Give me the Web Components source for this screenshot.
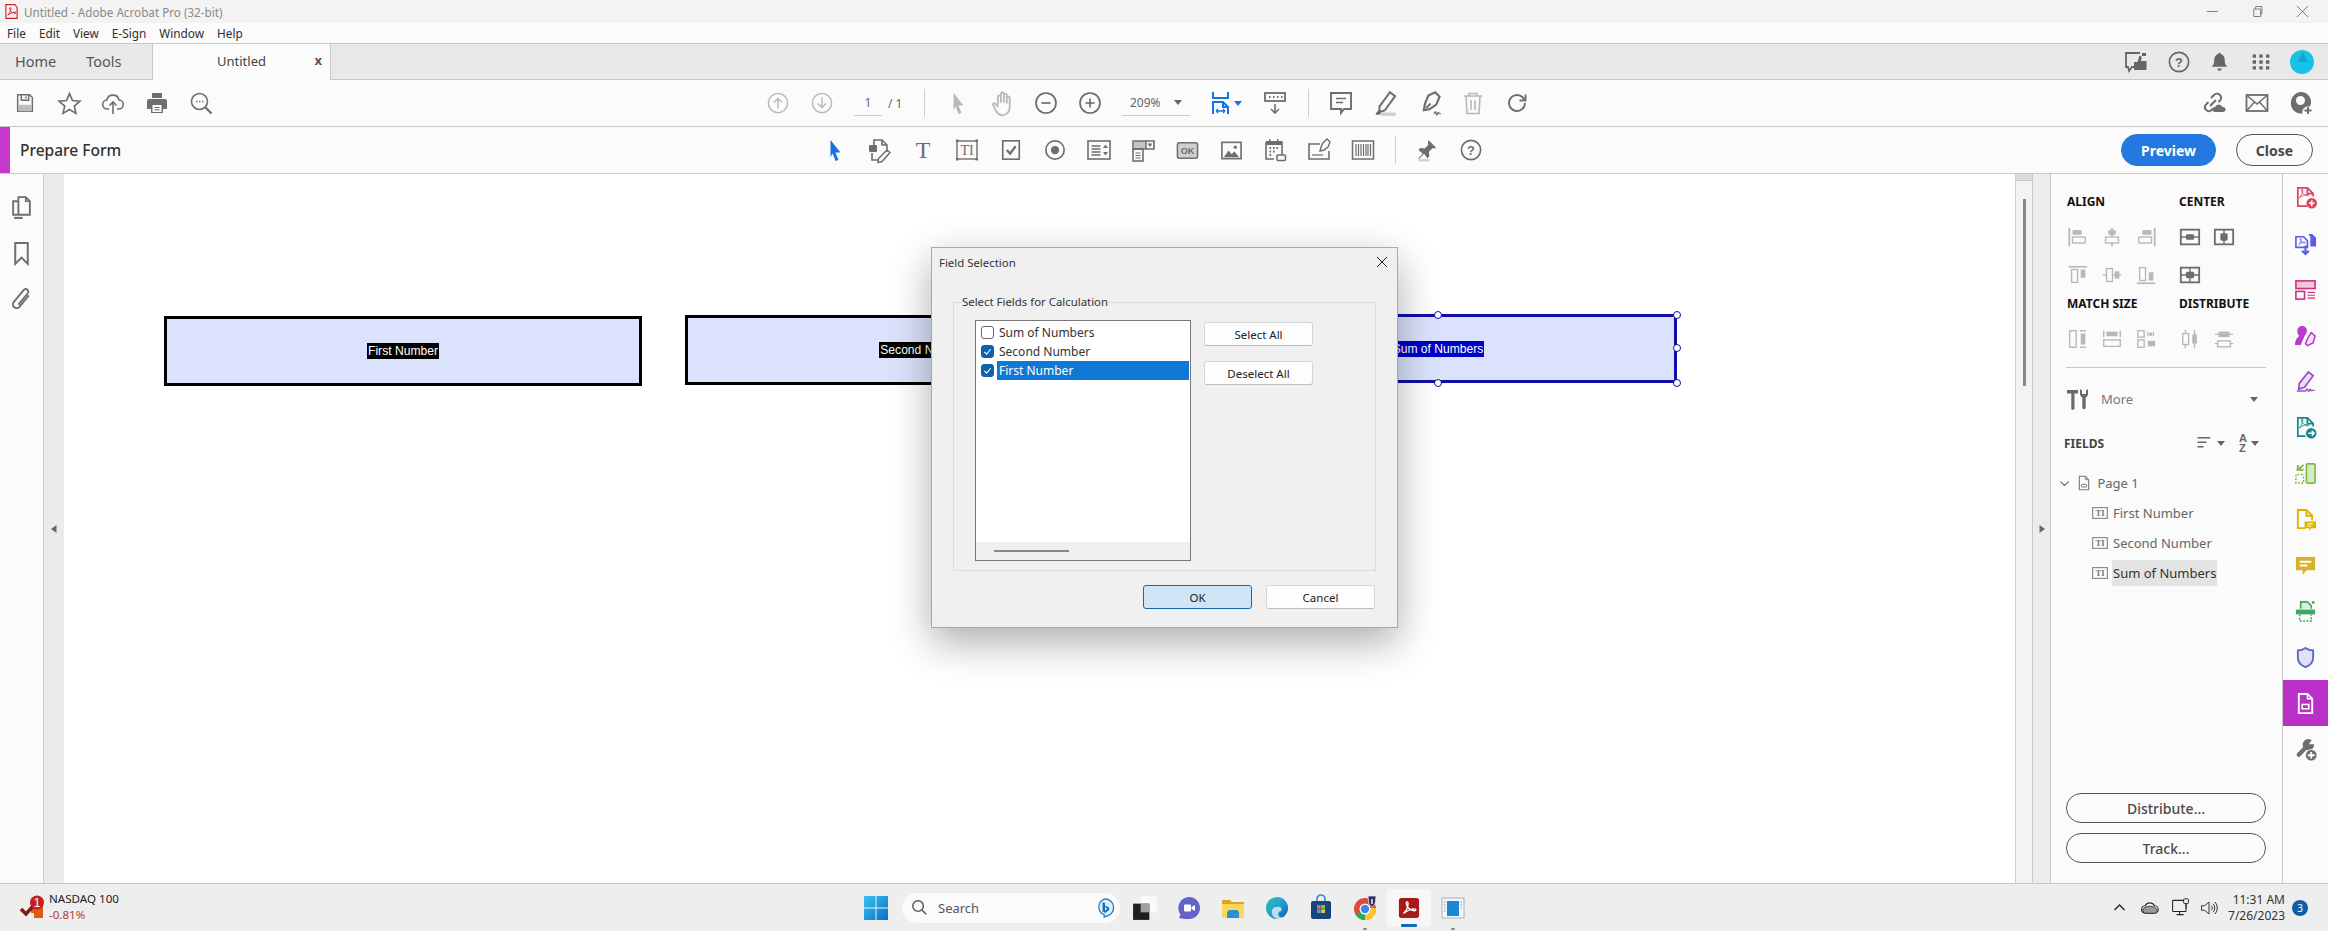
<!DOCTYPE html>
<html lang="en">
<head>
<meta charset="utf-8">
<title>Untitled - Adobe Acrobat Pro (32-bit)</title>
<style>
  html, body { margin: 0; padding: 0; background: #fff; }
  body { width: 2328px; height: 931px; overflow: hidden; font-family: "Noto Sans", "Open Sans", sans-serif; }
</style>
</head>
<body>
<acro-app></acro-app>
<script>
const F = 'fill="currentColor" stroke="none"';
const SWIRL = 'M6 18c3-3 5-8 5-11 0-2-2-2-2 0 0 4 5 8 9 8 2 0 2-2 0-2-4 0-8 2-12 5z';
const ICONS = {
  save: `<path d="M4 3h13l3 3v15H4z"/><path d="M8 3v6h8V3M13 5v2"/><rect x="5" y="14" width="14" height="7" fill="#bdbdbd" stroke="none"/>`,
  star: `<path d="M12 2.5l2.9 6.6 7.1.7-5.4 4.7 1.6 7-6.2-3.7-6.2 3.7 1.6-7L2 9.8l7.1-.7z"/>`,
  upload: `<path d="M8 18H6.5a4.5 4.5 0 0 1-.6-9A6.2 6.2 0 0 1 18 9a4.5 4.5 0 0 1-.5 9H16"/><path d="M12 23V11M8.5 14.5L12 11l3.5 3.5"/>`,
  print: `<path ${F} d="M7 2h10v5H7zM4 8h16a2 2 0 0 1 2 2v8h-4v4H6v-4H2v-8a2 2 0 0 1 2-2z"/><rect x="7.5" y="14" width="9" height="7" fill="#fbfbfb" stroke="none"/><path d="M9.5 16.5h5M9.5 18.8h5" stroke-width="1"/>`,
  find: `<circle cx="10.5" cy="10.5" r="8"/><path d="M16.5 16.5l6 6" stroke-width="2.2"/><path d="M7 10.5h1.4M10 10.5h1.4M13 10.5h1.4" stroke-width="1.6"/>`,
  up: `<circle cx="12" cy="12" r="10.5"/><path d="M12 18V7M7.5 11.5L12 7l4.5 4.5"/>`,
  down: `<circle cx="12" cy="12" r="10.5"/><path d="M12 6v11M7.5 12.5L12 17l4.5-4.5"/>`,
  arrow: `<path ${F} d="M7.5 2l10 12.5h-5l3 7.5-3 1-2.8-7.5L7.5 19z"/>`,
  hand: `<path d="M8 13V6a1.3 1.3 0 0 1 2.6 0v5V3.5a1.3 1.3 0 0 1 2.6 0V11V4.5a1.3 1.3 0 0 1 2.6 0V12V7a1.3 1.3 0 0 1 2.6 0v8c0 4-2.5 7.5-6.3 7.5-3 0-4.5-1.5-6-4l-2.4-5c-.7-1.3 1-2.4 2-1.2L8 15"/>`,
  minus: `<circle cx="12" cy="12" r="10"/><path d="M7.5 12h9"/>`,
  plus: `<circle cx="12" cy="12" r="10"/><path d="M7.5 12h9M12 7.5v9"/>`,
  fit: `<path d="M4 1v6h15V1M4 23V11h10l5 5v7M14 11v5h5" stroke-width="2"/><path d="M7 20h9M7 20l2-2M7 20l2 2M16 20l-2-2M16 20l-2 2" stroke-width="1.3"/>`,
  select: `<rect x="2" y="2" width="20" height="8" stroke-width="1.8"/><path d="M6 6h1.5M10 6h1.5M14 6h1.5M18 6h1.5" stroke-width="2"/><path d="M12 13v9M8 18l4 4 4-4"/>`,
  comment: `<path d="M2 2h20v16h-7l-3 4v-4H2z" stroke-width="1.9"/><path d="M7 7.5h10M7 11.5h7"/>`,
  highlight: `<path d="M16 2l4.5 3.5-9 12.5-5 2 .2-5.5z" stroke-width="1.8"/><rect x="8" y="20" width="13" height="3" fill="#cfcfcf" stroke="none"/><path ${F} d="M4 20l2.5-3 2 1.5L7 22H3z"/>`,
  sign: `<path d="M17 2l4 4-3 7-6 4-5 1 1-6 3-7z" stroke-width="1.9"/><path d="M9 16l4-4"/><path d="M16 21c1-2 2-2 2 0s1 1 1.5-.5.7 1 2.5.5" stroke-width="1.2"/>`,
  trash: `<path d="M8 5V2.5h8V5M3 5h18M5 5l1 17.5h12L19 5M10 9v10M14 9v10"/>`,
  redo: `<path d="M20 12a8 8 0 1 1-2.4-5.7L20 9" stroke-width="1.9"/><path d="M20.5 3.5V9.5h-6" stroke-width="1.9"/>`,
  prep: `<path d="M7 8V2h8l5 5v7M15 2v5h5" stroke-width="1.6"/><rect x="2" y="7" width="8" height="7" rx="1" fill="currentColor" stroke="none"/><path d="M5 15v7h6"/><path d="M20 12l3 2.5-8 9-4 1 .5-4z" stroke-width="1.5"/>`,
  tfield: `<text x="12" y="20" text-anchor="middle" font-family="Liberation Serif" font-size="24" ${F}>T</text>`,
  tifield: `<rect x="2" y="3" width="20" height="18" stroke-width="1.4"/><path d="M1 1.5h2.5v2.5H1zM20.5 1.5H23v2.5h-2.5zM1 20h2.5v2.5H1zM20.5 20H23v2.5h-2.5z" ${F}/><text x="12" y="17" text-anchor="middle" font-family="Liberation Serif" font-size="14" ${F}>TI</text>`,
  check: `<rect x="3" y="2" width="18" height="20" stroke-width="1.8"/><path d="M7.5 12l3.5 4 6-8" stroke-width="2.6"/>`,
  radio: `<circle cx="12" cy="12" r="10" stroke-width="1.8"/><circle cx="12" cy="12" r="4.5" ${F}/>`,
  list: `<rect x="1" y="3" width="22" height="18" stroke-width="1.6"/><path d="M4.5 8h9M4.5 11h9M4.5 14h9M4.5 17h9" stroke-width="1.3"/><path ${F} d="M16 10l2.5-3.5L21 10zM16 14l2.5 3.5L21 14z"/>`,
  combo: `<rect x="2" y="3" width="13" height="8" fill="#c4c4c4" stroke="#777"/><path ${F} d="M16.5 5.5h5L19 9z"/><rect x="2" y="11" width="10" height="12"/><path d="M4.5 15h5M4.5 17.5h5M4.5 20h5" stroke-width="1.2"/><path d="M15 3h8v8h-8"/>`,
  okbtn: `<rect x="1.5" y="4" width="21" height="16" rx="2" fill="#cfcfcf" stroke-width="1.6"/><text x="12" y="16" text-anchor="middle" font-family="Liberation Sans" font-weight="700" font-size="9.5" ${F}>OK</text>`,
  image: `<rect x="2" y="3.5" width="20" height="17" stroke-width="1.7"/><path ${F} d="M4 19l5-7 3 4 3-3 5 6z"/><circle cx="16" cy="8.5" r="1.7" ${F}/>`,
  date: `<path d="M3 4h16v14H13M3 4v17h8" stroke-width="1.6"/><path ${F} d="M3 3h16v4H3zM6 1h1.5v3H6zM14 1h1.5v3H14z"/><path d="M6.5 10h1.6M10 10h1.6M13.5 10h1.6M6.5 13.5h1.6M10 13.5h1.6M6.5 17h1.6" stroke-width="2"/><rect x="14" y="17" width="8.5" height="5.5" rx="1" stroke-width="1.5" fill="#fbfbfb"/>`,
  signbox: `<path d="M13 6H2v15h20v-8" stroke-width="1.6"/><path d="M5 17h11" stroke-width="1.2"/><path d="M20 1l3 3-2 5-4 3-4 1 1-4 2-4z" stroke-width="1.4"/>`,
  barcode: `<rect x="1.5" y="3" width="21" height="18" stroke-width="1.5"/><path d="M5 6v12M7.5 6v12M10 6v12M12.5 6v12M15 6v12M17 6v12M19.5 6v12" stroke-width="1.2"/>`,
  pin: `<path ${F} d="M14 1l8 8-2.5 1-1-.5-4 4 .5 4.5-2 2-3.5-4.5L4 21l-.5-.5L8 15l-4.5-3.5 2-2 4.5.5 4-4-.5-1z"/><rect x="4" y="21" width="11" height="2.5" fill="#d0d0d0" stroke="none"/>`,
  help: `<circle cx="12" cy="12" r="10.5" stroke-width="1.8"/><text x="12" y="17" text-anchor="middle" font-family="Liberation Sans" font-weight="700" font-size="14" ${F}>?</text>`,
  feedback: `<path d="M16 3H2v14h2l1 4 3-4h2" stroke-width="1.8"/><path ${F} d="M10 12h3.5l1.5-5c.5-2 3-1.5 2.5 1L17 11h5.5v9H10z"/><path ${F} d="M18 3h4v3h-4z"/>`,
  bell: `<path ${F} d="M12 2c1 0 1.5.7 1.5 1.5C17 4.5 18 8 18 11c0 3 1 5 3 7H3c2-2 3-4 3-7 0-3 1-6.5 4.5-7.5C10.5 2.7 11 2 12 2zM9.5 20h5a2.5 2.5 0 0 1-5 0z"/>`,
  grid: `<path ${F} d="M2 3h4v4H2zM10 3h4v4h-4zM18 3h4v4h-4zM2 10h4v4H2zM10 10h4v4h-4zM18 10h4v4h-4zM2 17h4v4H2zM10 17h4v4h-4zM18 17h4v4h-4z"/>`,
  avatar: `<circle cx="12" cy="12" r="12" fill="#17c4e6" stroke="none"/><path d="M7 12l6-10 5 10z" fill="#1aa4c6" stroke="none"/>`,
  link: `<path d="M9 15l6-6M7.5 11L4.5 14a4 4 0 0 0 5.5 5.5l2-2M10 7l3-3a4 4 0 0 1 6 5.5l-1.5 1.5" stroke-width="2"/><path ${F} d="M14 21a2.5 2.5 0 0 1 0-5 4 4 0 0 1 7.5 0 2.5 2.5 0 0 1 1 5z"/>`,
  mail: `<rect x="1.5" y="4" width="21" height="16" stroke-width="1.8"/><path d="M1.5 4L12 13 22.5 4M1.5 20l8-9M22.5 20l-8-9" stroke-width="1.5"/>`,
  user: `<path ${F} d="M12 1a10 10 0 0 1 9 14.5 6 6 0 0 0-7.5 7.3A10 10 0 1 1 12 1z"/><circle cx="11.5" cy="9.5" r="4.5" fill="#fbfbfb" stroke="none"/><path d="M19 16v7M15.5 19.5h7" stroke-width="2"/>`,
  pages: `<path d="M8 19H4V6h4M9 2h7l4 4v13H9z" stroke-width="1.8"/><path d="M16 2v4h4" stroke-width="1.5"/><path ${F} d="M5 21h8v2H5z"/>`,
  bookmark: `<path d="M6 2h12v20l-6-6-6 6z" stroke-width="1.9"/>`,
  clip: `<path d="M19 8l-9 11a3.5 3.5 0 0 1-5.5-4.5L14 3a2.5 2.5 0 0 1 4 3L9 17" stroke-width="1.8"/>`,
  al1: `<path d="M2.5 2v20" stroke-width="2"/><rect x="6" y="4.5" width="10" height="5" ${F}/><rect x="6" y="12" width="14" height="6.5"/>`,
  al2: `<path d="M12 2v20" stroke-width="1.8"/><rect x="8" y="4.5" width="8" height="5" ${F}/><rect x="5" y="12" width="14" height="6.5" fill="#fbfbfb"/>`,
  al3: `<path d="M21.5 2v20" stroke-width="2"/><rect x="8" y="4.5" width="10" height="5" ${F}/><rect x="4" y="12" width="14" height="6.5"/>`,
  al4: `<path d="M2 3h20" stroke-width="1.8"/><rect x="5" y="6" width="6.5" height="14"/><rect x="15" y="6" width="5" height="9" ${F}/>`,
  al5: `<path d="M2 12h20" stroke-width="1.5"/><rect x="6" y="5" width="6.5" height="14" fill="#fbfbfb"/><rect x="15" y="8" width="5" height="8" ${F}/>`,
  al6: `<path d="M2 21h20" stroke-width="1.8"/><rect x="5" y="4" width="6.5" height="14"/><rect x="15" y="9" width="5" height="9" ${F}/>`,
  c1: `<rect x="2" y="4" width="20" height="16" stroke-width="2"/><path d="M2 12h20" stroke-width="1.5"/><rect x="7.5" y="9" width="9" height="6" rx="1.5" ${F}/>`,
  c2: `<rect x="2" y="4" width="20" height="16" stroke-width="2"/><path d="M12 4v16" stroke-width="1.5"/><rect x="8" y="8" width="8" height="8" rx="1.5" ${F}/>`,
  c3: `<rect x="2" y="4" width="20" height="16" stroke-width="2"/><path d="M2 12h20M12 4v16" stroke-width="1.5"/><rect x="7.5" y="8.5" width="9" height="7" rx="1.5" ${F}/>`,
  ms1: `<rect x="3" y="3" width="7" height="18"/><path d="M14 3h7M14 21h7" stroke-width="1.6"/><rect x="15" y="6" width="5" height="12" ${F}/>`,
  ms2: `<rect x="3" y="13" width="18" height="7"/><path d="M3 3v7M21 3v7" stroke-width="1.6"/><rect x="6" y="4" width="12" height="5" ${F}/>`,
  ms3: `<rect x="3" y="3" width="7" height="7"/><rect x="3" y="13" width="7" height="8"/><rect x="14" y="14" width="8" height="6" ${F}/><path d="M14 4v5M20 4v5" stroke-width="1.4"/><rect x="15.5" y="5" width="3" height="3.5" ${F}/>`,
  d1: `<path d="M7 2v20M17 2v20" stroke-width="1.5"/><rect x="4" y="6" width="6.5" height="12" fill="#fbfbfb"/><rect x="14.5" y="7" width="5" height="10" ${F}/>`,
  d2: `<path d="M2 7h20M2 17h20" stroke-width="1.5"/><rect x="6" y="4" width="12" height="6" ${F}/><rect x="5" y="14" width="14" height="6.5" fill="#fbfbfb"/>`,
  tools: `<path ${F} d="M1 3h11v3.5H8.5V22c0 1-3.2 1-3.2 0V6.5H1zM14 2v5c0 2 1.3 3 2.3 3.5V21c0 1.5 3.4 1.5 3.4 0V10.5C20.7 10 22 9 22 7V2l-2 1.5V7h-4V3.5z"/>`,
  sortlines: `<path d="M2 5h17M2 11h12M2 17h8" stroke-width="2"/>`,
  pagefield: `<path d="M5 2h9l5 5v15H5z" stroke-width="1.6"/><path d="M14 2v5h5" stroke-width="1.3"/><rect x="8" y="14" width="8" height="4" rx="1" stroke-width="1.4"/>`,
  treefield: `<rect x="1" y="4" width="22" height="16" stroke-width="1.5"/><text x="12" y="17" text-anchor="middle" font-family="Liberation Serif" font-weight="700" font-size="13" ${F}>TI</text>`,
  tri: `<path ${F} d="M7 4l11 8-11 8z"/>`,
  trileft: `<path ${F} d="M17 4L6 12l11 8z"/>`,
  t_create: `<path d="M14 21H4V2h10l6 6v3M14 2v6h6" stroke="#d8465b" stroke-width="1.8"/><path d="${SWIRL}" transform="translate(1 -1) scale(.75)" stroke="#d8465b" stroke-width="1.2"/><circle cx="18.5" cy="18" r="5.5" fill="#d8465b" stroke="none"/><path d="M18.5 15v6M15.5 18h6" stroke="#fff" stroke-width="1.8"/>`,
  t_combine: `<path d="M15 2h4l4 4v9h-6V5z" fill="#5c5ce0" stroke="none"/><path d="M2 5h8l4 4v7H2z" stroke="#5c5ce0" stroke-width="1.7"/><path d="${SWIRL}" transform="translate(2 4) scale(.5)" stroke="#5c5ce0"/><path d="M12 14v9M8.5 19.5L12 23l3.5-3.5" stroke="#5c5ce0" stroke-width="2.2"/>`,
  t_layout: `<rect x="2" y="3" width="20" height="8" fill="#f3c6dc" stroke="#c6387e" stroke-width="1.7"/><rect x="2" y="14" width="9" height="8" stroke="#c6387e" stroke-width="1.7"/><path d="M14 15h8M14 18h8M14 21h8" stroke="#c6387e" stroke-width="1.2"/>`,
  t_reqsign: `<path d="M8.5 2a5 5 0 0 1 5 5c0 2-1 3.5-2 4.5L7 22H1c0-4.500 1.500-7.500 4.500-9.500C4 11.500 3.500 9 3.500 7a5 5 0 0 1 5-5z" fill="#b93bc9" stroke="none"/><path d="M18 9l4 3.500-2 7-6 3-2-2 2.500-6z" fill="#f6e6f9" stroke="#b93bc9" stroke-width="1.6"/>`,
  t_fill: `<path d="M15 2l5 4-9 12-6 2 .5-6z" fill="#ebdcf7" stroke="#9a4fc9" stroke-width="1.8"/><path d="M3 22h9c1-2 2-3 2.5-1s1.5 1 2-.5 1 1.5 2 1 1-.5 3-.5" stroke="#9a4fc9" stroke-width="1.5"/>`,
  t_export: `<path d="M12 21H4V2h10l6 6v3M14 2v6h6" stroke="#14888c" stroke-width="1.8"/><path d="${SWIRL}" transform="translate(1 -1) scale(.75)" stroke="#14888c" stroke-width="1.2"/><circle cx="18" cy="18" r="5.5" fill="#14888c" stroke="none"/><path d="M15 18h6M18.5 15.5L21 18l-2.5 2.5" stroke="#fff" stroke-width="1.6"/>`,
  t_organize: `<rect x="13" y="2" width="9" height="20" rx="1" fill="#d8eac4" stroke="#7fb84b" stroke-width="1.7"/><path d="M9 13H2v9h8v-9" stroke="#7fb84b" stroke-width="1.6" stroke-dasharray="2 1.6"/><path d="M10 3L4 8h6M4 8V3" stroke="#7fb84b" stroke-width="2"/>`,
  t_note: `<path d="M12 21H4V2h9l6 6v5M13 2v6h6" stroke="#d7b700" stroke-width="2"/><path d="M11 14h12v7h-5l-2 3v-3h-5z" fill="#d7b700" stroke="none"/><path d="M14 16.5h6M14 18.8h4" stroke="#fff" stroke-width="1"/>`,
  t_comment: `<path d="M2 3h20v14h-9l-4 5v-5H2z" fill="#d9b02a" stroke="none"/><path d="M6 8h12M6 12h8" stroke="#fff" stroke-width="2"/>`,
  t_scan: `<path d="M7 9V2h7l4 4v3" fill="#d7f0de" stroke="#3ea860" stroke-width="1.7"/><path d="M2 10h20v5H2z" fill="#3ea860" stroke="none"/><path d="M6 15v7h12v-7" stroke="#3ea860" stroke-width="1.6" stroke-dasharray="2 1.5"/><path d="M20 1v3M18.5 2.5h3" stroke="#3ea860"/>`,
  t_shield: `<path d="M12 2c3 2 5.5 2.5 8 2.5V12c0 5-4 8.5-8 10-4-1.5-8-5-8-10V4.5C6.5 4.5 9 4 12 2z" fill="#dfe2f7" stroke="#5f62c4" stroke-width="1.9"/>`,
  t_form: `<path d="M5 2h9l5 5v15H5z" fill="none" stroke="#fff" stroke-width="2"/><path d="M14 2v5h5" stroke="#fff" stroke-width="1.5"/><rect x="8.5" y="13" width="7" height="4.5" stroke="#fff" stroke-width="1.6"/>`,
  t_wrench: `<path d="M13 9L5 17.5" stroke="#6e6e6e" stroke-width="4.5" stroke-linecap="round"/><circle cx="15" cy="7" r="6" fill="#6e6e6e" stroke="none"/><path d="M15.5 6.5L20 0h5v6.5z" fill="#fbfbfb" stroke="none"/><circle cx="18" cy="18" r="6" fill="#6e6e6e" stroke="#fbfbfb" stroke-width=".8"/><path d="M18 14.5v7M14.5 18h7" stroke="#fff" stroke-width="1.9"/>`,
  chev: `<path d="M3 8l9 8 9-8" stroke-width="2.6"/>`,
  acro: `<path d="M3 1h14l4 4v18H3z" fill="#fdf1f1" stroke="#c9252c" stroke-width="1.8"/><path d="${SWIRL}" stroke="#c9252c" stroke-width="1.5"/>`,
  winmin: `<path d="M3 12h18" stroke-width="1.5"/>`,
  winres: `<path d="M6 8h11v12H6zM9 8V4h10v12h-2" stroke-width="1.5"/>`,
  winclose: `<path d="M3 3l18 18M21 3L3 21" stroke-width="1.5"/>`,
  dlgclose: `<path d="M2 2l20 20M22 2L2 22" stroke-width="2"/>`,
  winlogo: `<defs><linearGradient id="w" x1="0" y1="0" x2="1" y2="1"><stop offset="0" stop-color="#36c4f4"/><stop offset="1" stop-color="#0a6fc4"/></linearGradient></defs><path fill="url(#w)" stroke="none" d="M0 0h11.5v11.5H0zM12.5 0H24v11.5H12.5zM0 12.5h11.5V24H0zM12.5 12.5H24V24H12.5z"/>`,
  glass: `<circle cx="10" cy="10" r="7.5" stroke-width="2"/><path d="M15.5 15.5l6 6" stroke-width="2.2"/>`,
  bing: `<path d="M12 1a10.5 10.5 0 0 1 3 20.5L11 23v-3A10 10 0 0 1 12 1z" fill="#dff0fb" stroke="#1a7bc4" stroke-width="1.5"/><path d="M9 5l3 1v9l3-2-2-1-1-3 5 2.5v3L12 18l-3-2z" fill="#1a6fc0" stroke="none"/>`,
  task: `<rect x="8" y="1" width="15" height="15" fill="#fafafa" stroke="none"/><rect x="1" y="8" width="15" height="15" fill="#1f1f1f" stroke="none"/><rect x="8" y="8" width="8" height="8" fill="#a0a0a0" stroke="none"/>`,
  meet: `<path d="M12 1a11 11 0 0 1 0 22H7.5L2 22l1.5-3.5A11 11 0 0 1 12 1z" fill="#6264c8" stroke="none"/><rect x="7" y="8.5" width="7" height="7" rx="1" fill="#fff" stroke="none"/><path d="M14.5 11l3.5-2v6l-3.5-2z" fill="#fff" stroke="none"/>`,
  folder: `<path d="M1 4h8l2 2h12v3H1z" fill="#d9a425" stroke="none"/><path d="M1 8h22v14H1z" fill="#fbd75b" stroke="none"/><path d="M6 16h12v6H6zM6 16l2-2h8l2 2z" fill="#2b8fd8" stroke="none"/>`,
  edge: `<defs><linearGradient id="e" x1="0" y1="0" x2="1" y2="1"><stop offset="0" stop-color="#35c1a0"/><stop offset=".5" stop-color="#1f9fd8"/><stop offset="1" stop-color="#0d5da8"/></linearGradient></defs><circle cx="12" cy="12" r="11" fill="url(#e)" stroke="none"/><path d="M13 23c-5-1-7-5-6-9 1-3 5-4 8-3 2 1 2 3 1 4-3 1-4 4-1 6 2 1 5 0 7-2-2 3-5 5-9 4z" fill="#f2f6fa" opacity=".75" stroke="none"/>`,
  store: `<path d="M8 6V3a4 4 0 0 1 8 0v3" stroke="#2d8bc6" stroke-width="1.6"/><rect x="2" y="5" width="20" height="18" rx="2" fill="#17447c" stroke="none"/><rect x="8" y="9" width="3.7" height="3.7" fill="#ef6b3c" stroke="none"/><rect x="12.3" y="9" width="3.7" height="3.7" fill="#7fc34a" stroke="none"/><rect x="8" y="13.3" width="3.7" height="3.7" fill="#33a8e8" stroke="none"/><rect x="12.3" y="13.3" width="3.7" height="3.7" fill="#f6c02b" stroke="none"/>`,
  chrome: `<circle cx="12" cy="13" r="11" fill="#e2483d" stroke="none"/><path d="M12 13L2.5 18.5A11 11 0 0 0 12 24l5.5-9z" fill="#35a853" stroke="none"/><path d="M12 13l5-1h6a11 11 0 0 1-11 12z" fill="#fbc52f" stroke="none"/><circle cx="12" cy="13" r="5.5" fill="#fff" stroke="none"/><circle cx="12" cy="13" r="4.2" fill="#3e85f0" stroke="none"/><path d="M15 0h8l-.5 6c-.5 3-2.5 4.5-3.5 5-1-.5-3-2-3.5-5z" fill="#2b2f66" stroke="#dfe2f0" stroke-width=".8"/><path d="M19 3v5" stroke="#fff" stroke-width="1.4"/>`,
  acrobat: `<rect x="1" y="1" width="22" height="22" rx="3" fill="#a81a1a" stroke="none"/><path d="${SWIRL}" stroke="#fff" stroke-width="1.5"/>`,
  note: `<rect x="1" y="2" width="22" height="20" fill="#f5f8fb" stroke="#9fb0bf" stroke-width="1"/><rect x="6" y="5" width="12" height="15" fill="#1a86d8" stroke="none"/><path d="M3 6h1.5M3 9h1.5M3 12h1.5M3 15h1.5M19.5 6H21M19.5 9H21M19.5 12H21" stroke="#888" stroke-width="1"/>`,
  caretup: `<path d="M4 16l8-8 8 8" stroke-width="2.2"/>`,
  cloud: `<path d="M6 19a5 5 0 0 1-.5-10A7 7 0 0 1 18 9a5 5 0 0 1 0 10z" fill="#fff" stroke="#333" stroke-width="1.5"/><path d="M5.5 11c4-2 9-2 13 0l3 3a4 4 0 0 1-3.5 5H6a5 5 0 0 1-4-5z" fill="#9a9a9a" stroke="#333" stroke-width="1.2"/>`,
  net: `<rect x="2" y="3" width="17" height="14" rx="1" stroke-width="1.3"/><path d="M7 21h9M11 17v4" stroke-width="1.3"/><rect x="16" y="1" width="6" height="6" rx="1" fill="#eee" stroke-width="1.2"/><path d="M19 7v6" stroke-width="1.2"/>`,
  vol: `<path d="M2 9h4l6-5v16l-6-5H2z" stroke-width="1.2"/><path d="M15 9a4 4 0 0 1 0 6M17.5 6.5a8 8 0 0 1 0 11M20 4a12 12 0 0 1 0 16" stroke-width="1.2"/>`,
  stock: `<path d="M11 8h5v-2h7v16h-9v-5h-3z" fill="#dd5a14" stroke="none"/><path d="M1 13l5 5 8-9" stroke="#7a1d10" stroke-width="3.5"/><circle cx="17" cy="6.5" r="7" fill="#c21f1f" stroke="none"/><text x="17" y="11" text-anchor="middle" font-family="Liberation Sans" font-size="12" fill="#fff" stroke="none">1</text>`
};

class AcIcon extends HTMLElement {
  connectedCallback() {
    if (this.shadowRoot) return;
    this.attachShadow({ mode: 'open' });
    const size = this.getAttribute('size') || 24;
    const sw = this.getAttribute('stroke') || 1.6;
    this.shadowRoot.innerHTML = `
      <style>
        :host { display: inline-flex; align-items: center; justify-content: center; color: inherit; line-height: 0; flex: none; }
        svg { display: block; overflow: visible; }
      </style>
      <svg width="${size}" height="${size}" viewBox="0 0 24 24" fill="none" stroke="currentColor" stroke-width="${sw}">${ICONS[this.getAttribute('name')] || ''}</svg>`;
  }
}
customElements.define('ac-icon', AcIcon);

// one square cell in a toolbar, 44px unless --slot says something else
class IconSlot extends HTMLElement {
  constructor() {
    super();
    this.attachShadow({ mode: 'open' });
    this.shadowRoot.innerHTML = `
      <style>
        :host { display: flex; align-items: center; justify-content: center; flex: none; width: var(--slot, 44px); height: var(--slot-h, 100%); color: var(--ico, #6e6e6e); }
        :host([off]) { color: #b8b8b8; }
        :host([blue]) { color: #1473e6; }
      </style>
      <slot></slot>`;
  }
}
customElements.define('icon-slot', IconSlot);

class TitleBar extends HTMLElement {
  constructor() {
    super();
    this.attachShadow({ mode: 'open' });
    this.shadowRoot.innerHTML = `
      <style>
        :host { display: flex; align-items: center; height: 23px; background: #f3f3f3; color: #8a8a8a; font: 11.7px "Noto Sans", sans-serif; --slot: 45px; --ico: #777; }
        .logo { margin: 0 5px 0 4px; }
        .title { flex: 1; }
        .ctl { display: flex; height: 100%; padding-right: 3px; }
      </style>
      <ac-icon class="logo" name="acro" size="15"></ac-icon>
      <span class="title"><slot></slot></span>
      <div class="ctl">
        <icon-slot><ac-icon name="winmin" size="15"></ac-icon></icon-slot>
        <icon-slot><ac-icon name="winres" size="15"></ac-icon></icon-slot>
        <icon-slot><ac-icon name="winclose" size="15"></ac-icon></icon-slot>
      </div>`;
  }
}
customElements.define('title-bar', TitleBar);

class MenuBar extends HTMLElement {
  constructor() {
    super();
    this.attachShadow({ mode: 'open' });
    this.shadowRoot.innerHTML = `
      <style>
        :host { display: flex; align-items: center; gap: 13px; height: 20px; padding-left: 7px; background: #fbfbfb; color: #2e2e2e; font: 11.8px "Noto Sans", sans-serif; }
      </style>
      <slot></slot>`;
  }
}
customElements.define('menu-bar', MenuBar);

class TabBar extends HTMLElement {
  constructor() {
    super();
    this.attachShadow({ mode: 'open' });
    this.shadowRoot.innerHTML = `
      <style>
        :host { display: flex; height: 37px; box-sizing: border-box; border-top: 1px solid #c8c8c8; border-bottom: 1px solid #c8c8c8; background: #e9e9e9; font: 14.5px "Noto Sans", sans-serif; color: #555; --slot: 41px; --ico: #666; }
        .home { display: flex; align-items: center; width: 152px; box-sizing: border-box; padding: 0 0 2px 15px; gap: 30px; }
        .doc { position: relative; display: flex; align-items: center; justify-content: center; box-sizing: border-box; width: 179px; height: 36px; padding-bottom: 2px; background: #fbfbfb; border: 1px solid #c8c8c8; border-width: 0 1px; font-size: 13px; color: #444; }
        .x { position: absolute; right: 8px; top: 7px; font-size: 13px; font-weight: 700; color: #555; }
        .fill { flex: 1; }
        .right { display: flex; padding-right: 6px; }
        .fb { margin-left: -2px; margin-right: 2px; }
      </style>
      <div class="home"><span>Home</span><span>Tools</span></div>
      <div class="doc"><span>Untitled</span><span class="x">x</span></div>
      <div class="fill"></div>
      <div class="right">
        <icon-slot class="fb"><ac-icon name="feedback" size="24"></ac-icon></icon-slot>
        <icon-slot><ac-icon name="help" size="22"></ac-icon></icon-slot>
        <icon-slot><ac-icon name="bell" size="21"></ac-icon></icon-slot>
        <icon-slot><ac-icon name="grid" size="20"></ac-icon></icon-slot>
        <icon-slot><ac-icon name="avatar" size="24"></ac-icon></icon-slot>
      </div>`;
  }
}
customElements.define('tab-bar', TabBar);

class MainToolbar extends HTMLElement {
  constructor() {
    super();
    this.attachShadow({ mode: 'open' });
    this.shadowRoot.innerHTML = `
      <style>
        :host { display: flex; align-items: center; height: 47px; box-sizing: border-box; border-bottom: 1px solid #c8c8c8; padding: 0 5px 0 3px; background: #fbfbfb; font: 12px "Noto Sans", sans-serif; color: #666; }
        .g { display: flex; height: 100%; align-items: center; }
        .left { width: 753px; }
        .page { display: flex; align-items: center; margin-left: 10px; gap: 6px; width: 70px; }
        .num { width: 28px; height: 26px; line-height: 26px; text-align: center; border-bottom: 1px solid #ccc; box-sizing: border-box; }
        .sep { width: 1px; height: 28px; background: #d0d0d0; flex: none; }
        .zoom { display: flex; align-items: center; justify-content: space-between; box-sizing: border-box; width: 68px; height: 26px; margin-left: 10px; padding: 0 8px; border-bottom: 1px solid #ccc; }
        .car { width: 0; height: 0; border: 4px solid transparent; border-top: 5px solid #666; border-bottom: 0; }
        .car.b { border-top-color: #1473e6; }
        .fit { display: flex; align-items: center; width: 44px; margin-left: 19px; color: #1473e6; gap: 1px; }
        .right { margin-left: auto; }
      </style>
      <div class="g left">
        <icon-slot><ac-icon name="save" size="22"></ac-icon></icon-slot>
        <icon-slot><ac-icon name="star" size="25"></ac-icon></icon-slot>
        <icon-slot><ac-icon name="upload" size="24"></ac-icon></icon-slot>
        <icon-slot><ac-icon name="print" size="24"></ac-icon></icon-slot>
        <icon-slot><ac-icon name="find" size="24"></ac-icon></icon-slot>
      </div>
      <div class="g">
        <icon-slot off><ac-icon name="up" size="22"></ac-icon></icon-slot>
        <icon-slot off><ac-icon name="down" size="22"></ac-icon></icon-slot>
        <div class="page"><span class="num">1</span><span>/ 1</span></div>
        <span class="sep"></span>
        <span style="width:11px"></span>
        <icon-slot off><ac-icon name="arrow" size="24"></ac-icon></icon-slot>
        <icon-slot off><ac-icon name="hand" size="27"></ac-icon></icon-slot>
        <icon-slot style="--ico:#666"><ac-icon name="minus" size="24"></ac-icon></icon-slot>
        <icon-slot style="--ico:#666"><ac-icon name="plus" size="24"></ac-icon></icon-slot>
        <div class="zoom"><span>209%</span><span class="car"></span></div>
        <div class="fit"><ac-icon name="fit" size="24"></ac-icon><span class="car b"></span></div>
        <icon-slot><ac-icon name="select" size="24"></ac-icon></icon-slot>
        <span style="width:11px"></span>
        <span class="sep"></span>
        <span style="width:10px"></span>
        <icon-slot><ac-icon name="comment" size="24"></ac-icon></icon-slot>
        <icon-slot><ac-icon name="highlight" size="27"></ac-icon></icon-slot>
        <icon-slot><ac-icon name="sign" size="27"></ac-icon></icon-slot>
        <icon-slot off><ac-icon name="trash" size="24"></ac-icon></icon-slot>
        <icon-slot><ac-icon name="redo" size="24"></ac-icon></icon-slot>
      </div>
      <div class="g right">
        <icon-slot><ac-icon name="link" size="24"></ac-icon></icon-slot>
        <icon-slot><ac-icon name="mail" size="24"></ac-icon></icon-slot>
        <icon-slot><ac-icon name="user" size="24"></ac-icon></icon-slot>
      </div>`;
  }
}
customElements.define('main-toolbar', MainToolbar);

class PillButton extends HTMLElement {
  constructor() {
    super();
    this.attachShadow({ mode: 'open' });
    this.shadowRoot.innerHTML = `
      <style>
        :host { display: flex; align-items: center; justify-content: center; box-sizing: border-box; height: var(--h, 30px); border: 1.5px solid #555; border-radius: 16px; color: #4a4a4a; font: 500 14px "Noto Sans", sans-serif; }
        :host([primary]) { background: #2479e0; border-color: #2479e0; color: #fff; font-weight: 700; }
        :host([strong]) { font-weight: 700; }
      </style>
      <slot></slot>`;
  }
}
customElements.define('pill-button', PillButton);

class FormToolbar extends HTMLElement {
  constructor() {
    super();
    this.attachShadow({ mode: 'open' });
    this.shadowRoot.innerHTML = `
      <style>
        :host { display: flex; align-items: center; height: 47px; box-sizing: border-box; border-bottom: 1px solid #c8c8c8; background: #fbfbfb; }
        .mark { width: 10px; height: 100%; background: #c637cf; flex: none; }
        .name { width: 803px; padding-left: 10px; box-sizing: border-box; font: 500 15.5px "Noto Sans", sans-serif; color: #333; }
        .g { display: flex; height: 100%; align-items: center; }
        .sep { width: 1px; height: 28px; background: #d0d0d0; margin: 0 8px 0 10px; }
        .btns { display: flex; gap: 20px; margin-left: auto; padding-right: 15px; --h: 32px; }
        pill-button[primary] { width: 95px; }
        .close { width: 77px; }
      </style>
      <span class="mark"></span>
      <span class="name"><slot></slot></span>
      <div class="g">
        <icon-slot blue><ac-icon name="arrow" size="24"></ac-icon></icon-slot>
        <icon-slot><ac-icon name="prep" size="24"></ac-icon></icon-slot>
        <icon-slot><ac-icon name="tfield" size="24"></ac-icon></icon-slot>
        <icon-slot><ac-icon name="tifield" size="24"></ac-icon></icon-slot>
        <icon-slot><ac-icon name="check" size="22"></ac-icon></icon-slot>
        <icon-slot><ac-icon name="radio" size="22"></ac-icon></icon-slot>
        <icon-slot><ac-icon name="list" size="24"></ac-icon></icon-slot>
        <icon-slot><ac-icon name="combo" size="24"></ac-icon></icon-slot>
        <icon-slot><ac-icon name="okbtn" size="23"></ac-icon></icon-slot>
        <icon-slot><ac-icon name="image" size="23"></ac-icon></icon-slot>
        <icon-slot><ac-icon name="date" size="24"></ac-icon></icon-slot>
        <icon-slot><ac-icon name="signbox" size="24"></ac-icon></icon-slot>
        <icon-slot><ac-icon name="barcode" size="24"></ac-icon></icon-slot>
        <span class="sep"></span>
        <icon-slot><ac-icon name="pin" size="23"></ac-icon></icon-slot>
        <icon-slot style="margin-left:1px"><ac-icon name="help" size="22"></ac-icon></icon-slot>
      </div>
      <div class="btns">
        <pill-button primary>Preview</pill-button>
        <pill-button class="close" strong>Close</pill-button>
      </div>`;
  }
}
customElements.define('form-toolbar', FormToolbar);

class LeftRail extends HTMLElement {
  constructor() {
    super();
    this.attachShadow({ mode: 'open' });
    this.shadowRoot.innerHTML = `
      <style>
        :host { display: flex; flex: none; }
        .icons { display: flex; flex-direction: column; box-sizing: border-box; width: 44px; padding-top: 10px; background: #fbfbfb; border-right: 1px solid #cfcfcf; --slot: 43px; --slot-h: 46px; }
        .strip { display: flex; align-items: center; justify-content: center; width: 20px; background: #ebebeb; color: #666; }
      </style>
      <div class="icons">
        <icon-slot><ac-icon name="pages" size="25"></ac-icon></icon-slot>
        <icon-slot><ac-icon name="bookmark" size="25"></ac-icon></icon-slot>
        <icon-slot><ac-icon name="clip" size="25"></ac-icon></icon-slot>
      </div>
      <div class="strip"><ac-icon name="trileft" size="12"></ac-icon></div>`;
  }
}
customElements.define('left-rail', LeftRail);

// a form field on the page, placed where it is on the free canvas of the document
class FormField extends HTMLElement {
  constructor() {
    super();
    this.attachShadow({ mode: 'open' });
    this.shadowRoot.innerHTML = `
      <style>
        :host { position: absolute; display: flex; align-items: center; justify-content: center; box-sizing: border-box; width: 478px; height: 70px; background: #dbe2fb; border: 3px solid #000; font: 12.1px "Liberation Sans", sans-serif; color: #fff; }
        :host([active]) { border-color: #0f0fa8; height: 69px; }
        .txt { background: #000; height: 16px; line-height: 16px; padding: 0 1px; white-space: nowrap; }
        :host([active]) .txt { background: #0000c8; }
        i { display: none; position: absolute; width: 6px; height: 6px; border: 1.5px solid #0f0fa8; border-radius: 50%; background: #fff; }
        :host([active]) i { display: block; }
      </style>
      <span class="txt"><slot></slot></span>
      <i style="left:-6.5px;top:-6.5px"></i><i style="left:calc(50% - 4.5px);top:-6.5px"></i><i style="right:-6.5px;top:-6.5px"></i>
      <i style="left:-6.5px;top:calc(50% - 4.5px)"></i><i style="right:-6.5px;top:calc(50% - 4.5px)"></i>
      <i style="left:-6.5px;bottom:-6.5px"></i><i style="left:calc(50% - 4.5px);bottom:-6.5px"></i><i style="right:-6.5px;bottom:-6.5px"></i>`;
  }
}
customElements.define('form-field', FormField);

class DocCanvas extends HTMLElement {
  constructor() {
    super();
    this.attachShadow({ mode: 'open' });
    this.shadowRoot.innerHTML = `
      <style>
        :host { position: relative; display: block; flex: 1; background: #fff; overflow: hidden; }
      </style>
      <slot></slot>`;
  }
}
customElements.define('doc-canvas', DocCanvas);

class SideStrips extends HTMLElement {
  constructor() {
    super();
    this.attachShadow({ mode: 'open' });
    this.shadowRoot.innerHTML = `
      <style>
        :host { display: flex; flex: none; }
        .scroll { width: 18px; box-sizing: border-box; background: #f3f3f3; border-left: 1px solid #cfcfcf; border-right: 1px solid #c8c8c8; }
        .top { height: 6px; background: #dcdcdc; border-bottom: 1px solid #c8c8c8; }
        .thumb { width: 3px; height: 187px; margin: 18px 0 0 7px; background: #888; }
        .collapse { display: flex; align-items: center; justify-content: center; width: 18px; box-sizing: border-box; background: #ececec; border-right: 1px solid #c8c8c8; color: #666; }
      </style>
      <div class="scroll"><div class="top"></div><div class="thumb"></div></div>
      <div class="collapse"><ac-icon name="tri" size="12"></ac-icon></div>`;
  }
}
customElements.define('side-strips', SideStrips);

class TreeItem extends HTMLElement {
  constructor() {
    super();
    this.attachShadow({ mode: 'open' });
    this.shadowRoot.innerHTML = `
      <style>
        :host { display: flex; align-items: center; height: 30px; padding-left: 31px; gap: 4px; color: #666; font: 13px "Noto Sans", sans-serif; }
        :host([sel]) span { background: #e3e3e3; color: #333; }
        span { display: block; height: 26px; line-height: 26px; padding: 0 1px; }
        ac-icon { color: #777; }
      </style>
      <ac-icon name="treefield" size="16"></ac-icon>
      <span><slot></slot></span>`;
  }
}
customElements.define('tree-item', TreeItem);

class RightPanel extends HTMLElement {
  constructor() {
    super();
    this.attachShadow({ mode: 'open' });
    const cell = (n, c) => `<icon-slot ${c || ''}><ac-icon name="${n}" size="22" stroke="1.5"></ac-icon></icon-slot>`;
    this.shadowRoot.innerHTML = `
      <style>
        :host { display: flex; flex-direction: column; flex: none; box-sizing: border-box; width: 231px; padding: 18px 0 20px 10px; background: #fbfbfb; font: 13px "Noto Sans", sans-serif; color: #666; --slot: 34px; --slot-h: 38px; }
        .cols { display: grid; grid-template-columns: 112px 1fr; }
        .h { height: 20px; line-height: 20px; padding-left: 6px; font-size: 12px; font-weight: 700; color: #111; white-space: nowrap; }
        .r { display: flex; }
        .mt { margin-top: 6px; }
        .rule { height: 1px; margin: 9px 16px 0 5px; background: #c8c8c8; flex: none; }
        .more { display: flex; align-items: center; height: 40px; margin-top: 11px; padding-left: 5px; font-size: 13px; color: #777; }
        .more ac-icon { color: #6a6a6a; margin-right: 11px; }
        .car { width: 0; height: 0; margin-left: auto; margin-right: 24px; border: 4px solid transparent; border-top: 5px solid #666; border-bottom: 0; }
        .fields { display: flex; align-items: center; height: 24px; margin-top: 12px; padding-left: 3px; font-size: 12px; font-weight: 700; color: #444; }
        .sort { display: flex; align-items: center; margin-left: auto; padding-right: 23px; gap: 2px; color: #666; }
        .sort .car { margin: 0 12px 0 1px; }
        .sort .car:last-child { margin: 0 0 0 2px; }
        .az { display: flex; flex-direction: column; font: 700 11px/10px "Liberation Sans", sans-serif; color: #666; }
        .page { display: flex; align-items: center; height: 30px; margin: 13px 0 0 -2px; color: #666; }
        .page .c { color: #666; margin-right: 6px; }
        .page .i { color: #777; margin-right: 2px; }
        .grow { flex: 1; }
        .btns { display: flex; flex-direction: column; gap: 10px; margin: 0 16px 0 5px; }
      </style>
      <div class="cols">
        <div class="h">ALIGN</div><div class="h">CENTER</div>
        <div class="r mt">${cell('al1','off')}${cell('al2','off')}${cell('al3','off')}</div>
        <div class="r mt">${cell('c1')}${cell('c2')}</div>
        <div class="r">${cell('al4','off')}${cell('al5','off')}${cell('al6','off')}</div>
        <div class="r">${cell('c3')}</div>
        <div class="h">MATCH SIZE</div><div class="h">DISTRIBUTE</div>
        <div class="r mt">${cell('ms1','off')}${cell('ms2','off')}${cell('ms3','off')}</div>
        <div class="r mt">${cell('d1','off')}${cell('d2','off')}</div>
      </div>
      <div class="rule"></div>
      <div class="more"><ac-icon name="tools" size="24"></ac-icon><span>More</span><span class="car"></span></div>
      <div class="fields"><span>FIELDS</span>
        <div class="sort"><ac-icon name="sortlines" size="18"></ac-icon><span class="car"></span><span class="az"><span>A</span><span>Z</span></span><span class="car"></span></div>
      </div>
      <div class="page"><ac-icon class="c" name="chev" size="11"></ac-icon><ac-icon class="i" name="pagefield" size="16"></ac-icon><span>&nbsp;Page 1</span></div>
      <slot></slot>
      <div class="grow"></div>
      <div class="btns"><pill-button>Distribute...</pill-button><pill-button>Track...</pill-button></div>`;
  }
}
customElements.define('right-panel', RightPanel);

class ToolsRail extends HTMLElement {
  constructor() {
    super();
    this.attachShadow({ mode: 'open' });
    const names = ['t_create','t_combine','t_layout','t_reqsign','t_fill','t_export','t_organize','t_note','t_comment','t_scan','t_shield','t_form','t_wrench'];
    this.shadowRoot.innerHTML = `
      <style>
        :host { display: block; flex: none; width: 46px; box-sizing: border-box; background: #fbfbfb; border-left: 1px solid #c8c8c8; --slot: 45px; --slot-h: 46px; }
        .on { background: #b92fc8; }
      </style>
      ${names.map(n => `<icon-slot class="${n === 't_form' ? 'on' : ''}"><ac-icon name="${n}" size="23"></ac-icon></icon-slot>`).join('')}`;
  }
}
customElements.define('tools-rail', ToolsRail);

class WinButton extends HTMLElement {
  constructor() {
    super();
    this.attachShadow({ mode: 'open' });
    this.shadowRoot.innerHTML = `
      <style>
        :host { display: flex; align-items: center; justify-content: center; box-sizing: border-box; width: 109px; height: 24px; background: #fdfdfd; border: 1px solid #d6d6d6; border-bottom-color: #bdbdbd; border-radius: 3px; font: 11.5px "Noto Sans", sans-serif; color: #222; }
        :host([def]) { background: #cfe4f4; border-color: #0f6cb0; }
      </style>
      <slot></slot>`;
  }
}
customElements.define('win-button', WinButton);

class CheckRow extends HTMLElement {
  constructor() {
    super();
    this.attachShadow({ mode: 'open' });
    this.shadowRoot.innerHTML = `
      <style>
        :host { display: flex; align-items: center; height: 19px; padding-left: 5px; font: 12px "Noto Sans", sans-serif; color: #333; }
        .box { display: flex; align-items: center; justify-content: center; box-sizing: border-box; width: 13px; height: 13px; border: 1px solid #666; border-radius: 3px; background: #fff; margin-right: 3px; flex: none; }
        :host([on]) .box { background: #0f62b0; border-color: #0f62b0; }
        svg { display: none; }
        :host([on]) svg { display: block; }
        .t { flex: 1; height: 19px; line-height: 19px; padding-left: 2px; margin-right: 1px; }
        :host([sel]) .t { background: #0f78d4; color: #fff; }
      </style>
      <span class="box"><svg width="9" height="9" viewBox="0 0 10 10" fill="none" stroke="#fff" stroke-width="1.2"><path d="M1.5 5.5L4 8l4.5-5.5"/></svg></span>
      <span class="t"><slot></slot></span>`;
  }
}
customElements.define('check-row', CheckRow);

class FieldDialog extends HTMLElement {
  constructor() {
    super();
    this.attachShadow({ mode: 'open' });
    this.shadowRoot.innerHTML = `
      <style>
        :host { position: absolute; left: 931px; top: 247px; display: flex; flex-direction: column; box-sizing: border-box; width: 467px; height: 381px; background: #f0f0f0; border: 1px solid #a8a8a8; box-shadow: 0 14px 38px rgba(0,0,0,.33); font: 11.4px "Noto Sans", sans-serif; color: #222; }
        .head { display: flex; align-items: center; justify-content: space-between; height: 28px; padding: 0 9px 0 7px; flex: none; color: #333; }
        .head ac-icon { color: #222; }
        fieldset { box-sizing: border-box; width: 423px; height: 277px; margin: 18px 0 0 21px; padding: 0; border: 1px solid #dcdcdc; display: flex; }
        legend { margin-left: 7px; padding: 0 1px; line-height: 16px; color: #333; }
        .inner { display: flex; width: 100%; padding: 10px 0 0 21px; gap: 13px; }
        .list { display: flex; flex-direction: column; box-sizing: border-box; width: 216px; height: 241px; padding-top: 2px; background: #fff; border: 1px solid #777; }
        .hs { margin-top: auto; height: 18px; flex: none; padding: 8px 0 0 18px; box-sizing: border-box; background: #f0f0f0; }
        .hs i { display: block; width: 75px; height: 2px; background: #888; }
        .acts { display: flex; flex-direction: column; gap: 15px; padding-top: 2px; }
        .foot { display: flex; justify-content: flex-end; gap: 14px; padding: 14px 22px 0 0; }
      </style>
      <div class="head"><slot name="title"></slot><ac-icon name="dlgclose" size="12"></ac-icon></div>
      <fieldset>
        <legend>Select Fields for Calculation</legend>
        <div class="inner">
          <div class="list">
            <slot></slot>
            <div class="hs"><i></i></div>
          </div>
          <div class="acts"><win-button>Select All</win-button><win-button>Deselect All</win-button></div>
        </div>
      </fieldset>
      <div class="foot"><win-button def>OK</win-button><win-button>Cancel</win-button></div>`;
  }
}
customElements.define('field-dialog', FieldDialog);

class TaskBar extends HTMLElement {
  constructor() {
    super();
    this.attachShadow({ mode: 'open' });
    this.shadowRoot.innerHTML = `
      <style>
        :host { display: flex; align-items: center; height: 48px; box-sizing: border-box; border-top: 1px solid #c8c8c8; background: #eeeeee; font: 12px "Noto Sans", sans-serif; color: #222; --slot: 44px; --ico: #222; }
        .stock { display: flex; align-items: center; width: 864px; box-sizing: border-box; padding-left: 20px; gap: 5px; flex: none; }
        .stack { display: flex; flex-direction: column; line-height: 16px; font-size: 11.6px; margin-bottom: 2px; }
        .red { color: #b23a3a; }
        .search { display: flex; align-items: center; box-sizing: border-box; width: 218px; height: 30px; margin-left: 14px; padding: 0 5px 0 9px; border-radius: 15px; background: #fbfbfb; color: #555; font-size: 13px; gap: 10px; flex: none; }
        .search ac-icon:last-child { margin-left: auto; }
        .apps { display: flex; height: 100%; align-items: center; margin-left: 3px; }
        .app { position: relative; }
        .app.on { background: #f7f7f7; border-radius: 4px; height: 38px; }
        .dot { position: absolute; bottom: 1px; left: 50%; margin-left: -2px; width: 4px; height: 2px; border-radius: 1px; background: #888; }
        .on .dot { bottom: 0; margin-left: -8px; width: 16px; height: 3px; background: #0f6cbd; }
        .tray { display: flex; align-items: center; margin-left: auto; height: 100%; }
        .tray icon-slot { --slot: 31px; }
        .clock { display: flex; flex-direction: column; align-items: flex-end; line-height: 16px; margin-left: 6px; color: #333; font-size: 12px; }
        .badge { display: flex; align-items: center; justify-content: center; width: 16px; height: 16px; margin: 0 20px 0 7px; border-radius: 50%; background: #0f5fa8; color: #fff; font-size: 10px; }
      </style>
      <div class="stock"><ac-icon name="stock" size="24"></ac-icon><div class="stack"><span>NASDAQ 100</span><span class="red">-0.81%</span></div></div>
      <ac-icon name="winlogo" size="24"></ac-icon>
      <div class="search"><ac-icon name="glass" size="17"></ac-icon><span>Search</span><ac-icon name="bing" size="20"></ac-icon></div>
      <div class="apps">
        <icon-slot class="app"><ac-icon name="task" size="26"></ac-icon></icon-slot>
        <icon-slot class="app"><ac-icon name="meet" size="24"></ac-icon></icon-slot>
        <icon-slot class="app"><ac-icon name="folder" size="24"></ac-icon></icon-slot>
        <icon-slot class="app"><ac-icon name="edge" size="24"></ac-icon></icon-slot>
        <icon-slot class="app"><ac-icon name="store" size="24"></ac-icon></icon-slot>
        <icon-slot class="app"><ac-icon name="chrome" size="24"></ac-icon><span class="dot"></span></icon-slot>
        <icon-slot class="app on"><ac-icon name="acrobat" size="22"></ac-icon><span class="dot"></span></icon-slot>
        <icon-slot class="app"><ac-icon name="note" size="24"></ac-icon><span class="dot"></span></icon-slot>
      </div>
      <div class="tray">
        <icon-slot style="margin-right:-1px"><ac-icon name="caretup" size="15"></ac-icon></icon-slot>
        <icon-slot><ac-icon name="cloud" size="18"></ac-icon></icon-slot>
        <icon-slot><ac-icon name="net" size="19"></ac-icon></icon-slot>
        <icon-slot style="--slot:26px"><ac-icon name="vol" size="18"></ac-icon></icon-slot>
        <div class="clock"><span>11:31 AM</span><span>7/26/2023</span></div>
        <span class="badge">3</span>
      </div>`;
  }
}
customElements.define('task-bar', TaskBar);

class AcroApp extends HTMLElement {
  constructor() {
    super();
    this.attachShadow({ mode: 'open' });
    this.shadowRoot.innerHTML = `
      <style>
        :host { position: relative; display: flex; flex-direction: column; width: 2328px; height: 931px; overflow: hidden; }
        .work { display: flex; flex: 1; min-height: 0; }
        form-field.a { left: 100px; top: 142px; }
        form-field.b { left: 621px; top: 141px; }
        form-field.c { left: 1135px; top: 140px; }
      </style>
      <title-bar>Untitled - Adobe Acrobat Pro (32-bit)</title-bar>
      <menu-bar><span>File</span><span>Edit</span><span>View</span><span>E-Sign</span><span>Window</span><span>Help</span></menu-bar>
      <tab-bar></tab-bar>
      <main-toolbar></main-toolbar>
      <form-toolbar>Prepare Form</form-toolbar>
      <div class="work">
        <left-rail></left-rail>
        <doc-canvas>
          <form-field class="a">First Number</form-field>
          <form-field class="b">Second Number</form-field>
          <form-field class="c" active>Sum of Numbers</form-field>
        </doc-canvas>
        <side-strips></side-strips>
        <right-panel>
          <tree-item>First Number</tree-item>
          <tree-item>Second Number</tree-item>
          <tree-item sel>Sum of Numbers</tree-item>
        </right-panel>
        <tools-rail></tools-rail>
      </div>
      <task-bar></task-bar>
      <field-dialog>
        <span slot="title">Field Selection</span>
        <check-row>Sum of Numbers</check-row>
        <check-row on>Second Number</check-row>
        <check-row on sel>First Number</check-row>
      </field-dialog>`;
  }
}
customElements.define('acro-app', AcroApp);
</script>
</body>
</html>
